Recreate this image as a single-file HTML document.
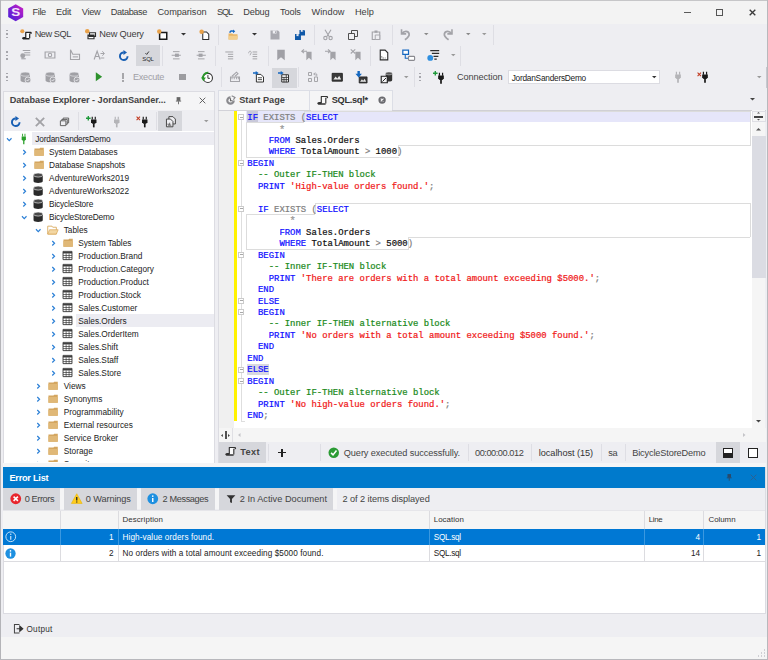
<!DOCTYPE html>
<html><head><meta charset="utf-8"><title>dbForge Studio</title>
<style>html,body{margin:0;padding:0}body{width:768px;height:660px;position:relative;overflow:hidden;background:#eeeef2;font-family:"Liberation Sans",sans-serif}svg{display:block;overflow:visible}</style></head>
<body>
<div style="position:absolute;left:0px;top:0px;width:768px;height:660px;background:#eeeef2;"></div>
<div style="position:absolute;left:0px;top:0px;width:768px;height:24px;background:#f3f3f3;"></div>
<svg style="position:absolute;left:6.80px;top:3.80px" width="17.4" height="17.4" viewBox="0 0 16 16"><defs><linearGradient id="lg" x1="0" y1="1" x2="1" y2="0"><stop offset="0" stop-color="#4420d8"/><stop offset="0.55" stop-color="#8a1fd0"/><stop offset="1" stop-color="#d21fc0"/></linearGradient></defs><path d="M8 0.2L14.9 4.1V11.9L8 15.8L1.1 11.9V4.1Z" fill="url(#lg)"/><text x="8" y="11.3" text-anchor="middle" font-family="Liberation Sans,sans-serif" font-weight="bold" font-size="9.5" fill="#f4e4fa" transform="translate(-2.4,0) scale(1.3,1)">S</text></svg>
<span id="t0" style="position:absolute;left:32.5px;top:6.30px;line-height:13.2px;font-size:9.2px;color:#3c3c3c;font-weight:normal;font-family:'Liberation Sans',sans-serif;letter-spacing:-0.378px;white-space:pre">File</span>
<span id="t1" style="position:absolute;left:56px;top:6.30px;line-height:13.2px;font-size:9.2px;color:#3c3c3c;font-weight:normal;font-family:'Liberation Sans',sans-serif;letter-spacing:-0.136px;white-space:pre">Edit</span>
<span id="t2" style="position:absolute;left:81.8px;top:6.30px;line-height:13.2px;font-size:9.2px;color:#3c3c3c;font-weight:normal;font-family:'Liberation Sans',sans-serif;letter-spacing:-0.262px;white-space:pre">View</span>
<span id="t3" style="position:absolute;left:110.8px;top:6.30px;line-height:13.2px;font-size:9.2px;color:#3c3c3c;font-weight:normal;font-family:'Liberation Sans',sans-serif;letter-spacing:-0.393px;white-space:pre">Database</span>
<span id="t4" style="position:absolute;left:157.5px;top:6.30px;line-height:13.2px;font-size:9.2px;color:#3c3c3c;font-weight:normal;font-family:'Liberation Sans',sans-serif;letter-spacing:-0.053px;white-space:pre">Comparison</span>
<span id="t5" style="position:absolute;left:217px;top:6.30px;line-height:13.2px;font-size:9.2px;color:#3c3c3c;font-weight:normal;font-family:'Liberation Sans',sans-serif;letter-spacing:-1.130px;white-space:pre">SQL</span>
<span id="t6" style="position:absolute;left:243.3px;top:6.30px;line-height:13.2px;font-size:9.2px;color:#3c3c3c;font-weight:normal;font-family:'Liberation Sans',sans-serif;letter-spacing:-0.176px;white-space:pre">Debug</span>
<span id="t7" style="position:absolute;left:280px;top:6.30px;line-height:13.2px;font-size:9.2px;color:#3c3c3c;font-weight:normal;font-family:'Liberation Sans',sans-serif;letter-spacing:-0.131px;white-space:pre">Tools</span>
<span id="t8" style="position:absolute;left:311.5px;top:6.30px;line-height:13.2px;font-size:9.2px;color:#3c3c3c;font-weight:normal;font-family:'Liberation Sans',sans-serif;letter-spacing:0.052px;white-space:pre">Window</span>
<span id="t9" style="position:absolute;left:355px;top:6.30px;line-height:13.2px;font-size:9.2px;color:#3c3c3c;font-weight:normal;font-family:'Liberation Sans',sans-serif;letter-spacing:-0.027px;white-space:pre">Help</span>
<div style="position:absolute;left:684px;top:12px;width:6.8px;height:1px;background:#5a5a5a;"></div>
<div style="position:absolute;left:716.3px;top:9px;width:6.6px;height:6.6px;background:transparent;border:1px solid #555;box-sizing:border-box"></div>
<svg style="position:absolute;left:748.50px;top:8.70px" width="7" height="7" viewBox="0 0 10 10"><path d="M1 1L9 9M9 1L1 9" stroke="#3a3a3a" stroke-width="1.9"/></svg>
<div style="position:absolute;left:6.0px;top:29.900000000000002px;width:1.5px;height:1.5px;background:#a6a6ac;"></div>
<div style="position:absolute;left:6.0px;top:33.3px;width:1.5px;height:1.5px;background:#a6a6ac;"></div>
<div style="position:absolute;left:6.0px;top:36.699999999999996px;width:1.5px;height:1.5px;background:#a6a6ac;"></div>
<div style="position:absolute;left:6.0px;top:51.199999999999996px;width:1.5px;height:1.5px;background:#a6a6ac;"></div>
<div style="position:absolute;left:6.0px;top:54.599999999999994px;width:1.5px;height:1.5px;background:#a6a6ac;"></div>
<div style="position:absolute;left:6.0px;top:57.99999999999999px;width:1.5px;height:1.5px;background:#a6a6ac;"></div>
<div style="position:absolute;left:6.0px;top:72.89999999999999px;width:1.5px;height:1.5px;background:#a6a6ac;"></div>
<div style="position:absolute;left:6.0px;top:76.3px;width:1.5px;height:1.5px;background:#a6a6ac;"></div>
<div style="position:absolute;left:6.0px;top:79.7px;width:1.5px;height:1.5px;background:#a6a6ac;"></div>
<svg style="position:absolute;left:20.00px;top:29.30px" width="4.6" height="4.6" viewBox="0 0 8 8"><circle cx="4" cy="4" r="3.6" fill="#e8a14a"/></svg>
<svg style="position:absolute;left:22.20px;top:31.10px" width="9.6" height="9.6" viewBox="0 0 12 12"><path d="M4.7 2H9.6V9.6H4.7Z" fill="#fafafa"/><path d="M4.2 1.6H10.6C11.8 1.6 11.8 3.2 10.6 3.2M4.7 1.6V9.2M9.6 3V9.2" fill="none" stroke="#222" stroke-width="1.5"/><path d="M1.2 9.8H9.4M1.3 9.8C0.8 9 1.3 8.4 2.2 8.4H4.6" fill="none" stroke="#222" stroke-width="1.9"/></svg>
<span id="t10" style="position:absolute;left:34.7px;top:28.30px;line-height:13.2px;font-size:9.2px;color:#3c3c3c;font-weight:normal;font-family:'Liberation Sans',sans-serif;letter-spacing:-0.461px;white-space:pre">New SQL</span>
<svg style="position:absolute;left:84.50px;top:28.60px" width="12" height="12" viewBox="0 0 16 16"><circle cx="3" cy="3" r="3" fill="#e8a14a"/><path d="M6 5H14V10H6Z M4 8H12V13H4Z" fill="#fff" stroke="#2d2d2d" stroke-width="1.5"/><path d="M4 9H12" stroke="#2d2d2d" stroke-width="2"/></svg>
<span id="t11" style="position:absolute;left:99.3px;top:28.30px;line-height:13.2px;font-size:9.2px;color:#3c3c3c;font-weight:normal;font-family:'Liberation Sans',sans-serif;letter-spacing:-0.173px;white-space:pre">New Query</span>
<svg style="position:absolute;left:157.00px;top:28.60px" width="12" height="12" viewBox="0 0 16 16"><path d="M3.5 4.5H13V13.5H3.5Z" fill="#fff" stroke="#1a1a1a" stroke-width="2"/><circle cx="3" cy="3.2" r="3" fill="#e8a14a"/></svg>
<svg style="position:absolute;left:180.50px;top:32.75px" width="5" height="2.5" viewBox="0 0 10 5"><path d="M0 0h10l-5 5z" fill="#333"/></svg>
<svg style="position:absolute;left:199.00px;top:28.60px" width="12" height="12" viewBox="0 0 16 16"><path d="M5 4H10L13 7V14H5Z" fill="#fff" stroke="#2d2d2d" stroke-width="1.4"/><circle cx="3.5" cy="3.5" r="3" fill="#e8a14a"/></svg>
<div style="position:absolute;left:218px;top:25px;width:1px;height:20px;background:#dedee4;"></div>
<svg style="position:absolute;left:227.00px;top:28.60px" width="12" height="12" viewBox="0 0 16 16"><path d="M2 6H7L8 7H14V14H2Z" fill="#e9b564"/><path d="M3 9H15L13 14H2Z" fill="#f3cf8e"/><path d="M3 5C3 2 6 1.5 8 2V0.5L11 3L8 5.5V4C6 3.5 5 4 5 5Z" fill="#1467c0"/></svg>
<svg style="position:absolute;left:251.50px;top:32.75px" width="5" height="2.5" viewBox="0 0 10 5"><path d="M0 0h10l-5 5z" fill="#333"/></svg>
<svg style="position:absolute;left:269.00px;top:28.60px" width="12" height="12" viewBox="0 0 16 16"><path d="M2 2H12L14 4V14H2Z" fill="#a9a9b0"/><path d="M5 2H10V6H5Z" fill="#eeeef2"/><path d="M8 3H9.3V5.3H8Z" fill="#a9a9b0"/></svg>
<svg style="position:absolute;left:293.70px;top:28.60px" width="12" height="12" viewBox="0 0 16 16"><g transform="translate(6,0) scale(0.62)"><path d="M2 2H12L14 4V14H2Z" fill="#0f58a8"/><path d="M5 2H10V6H5Z" fill="#eeeef2"/><path d="M8 3H9.3V5.3H8Z" fill="#0f58a8"/></g><g transform="translate(0,5.5) scale(0.66)"><path d="M2 2H12L14 4V14H2Z" fill="#0f58a8"/><path d="M5 2H10V6H5Z" fill="#eeeef2"/><path d="M8 3H9.3V5.3H8Z" fill="#0f58a8"/></g></svg>
<div style="position:absolute;left:314px;top:25px;width:1px;height:20px;background:#dedee4;"></div>
<svg style="position:absolute;left:321.80px;top:28.60px" width="12" height="12" viewBox="0 0 16 16"><path d="M4 1L9.5 10M12 1L6.5 10" stroke="#a3a3a8" stroke-width="1.5" fill="none"/><circle cx="4.5" cy="12" r="2.2" fill="none" stroke="#a3a3a8" stroke-width="1.4"/><circle cx="11.5" cy="12" r="2.2" fill="none" stroke="#a3a3a8" stroke-width="1.4"/></svg>
<svg style="position:absolute;left:346.50px;top:28.60px" width="12" height="12" viewBox="0 0 16 16"><path d="M6 2H14V10H6Z" fill="none" stroke="#3c3c3c" stroke-width="1.2"/><path d="M2 6H10V14H2Z" fill="#f0f0f3" stroke="#3c3c3c" stroke-width="1.2"/></svg>
<svg style="position:absolute;left:370.00px;top:28.60px" width="12" height="12" viewBox="0 0 16 16"><path d="M3 4H13V14H3Z" fill="none" stroke="#a3a3a8" stroke-width="1.5"/><path d="M6 2H10V5H6Z" fill="#a3a3a8"/><path d="M7 8H13V14H7Z" fill="#eeeef2" stroke="#a3a3a8" stroke-width="1.2"/></svg>
<div style="position:absolute;left:392px;top:25px;width:1px;height:20px;background:#dedee4;"></div>
<svg style="position:absolute;left:398.55px;top:27.85px" width="13.5" height="13.5" viewBox="0 0 16 16"><path d="M3 1.5V7H8.5" fill="none" stroke="#a3a3a8" stroke-width="1.9"/><path d="M3.5 6.5C6 3 11 3 12 7C12.5 10 10 12 7 14" fill="none" stroke="#a3a3a8" stroke-width="2.1"/></svg>
<svg style="position:absolute;left:423.75px;top:32.88px" width="4.5" height="2.25" viewBox="0 0 10 5"><path d="M0 0h10l-5 5z" fill="#888"/></svg>
<svg style="position:absolute;left:440.95px;top:27.85px" width="13.5" height="13.5" viewBox="0 0 16 16"><g transform="translate(16,0) scale(-1,1)"><path d="M3 1.5V7H8.5" fill="none" stroke="#a3a3a8" stroke-width="1.9"/><path d="M3.5 6.5C6 3 11 3 12 7C12.5 10 10 12 7 14" fill="none" stroke="#a3a3a8" stroke-width="2.1"/></g></svg>
<svg style="position:absolute;left:465.75px;top:32.88px" width="4.5" height="2.25" viewBox="0 0 10 5"><path d="M0 0h10l-5 5z" fill="#888"/></svg>
<svg style="position:absolute;left:482.45px;top:32.88px" width="4.5" height="2.25" viewBox="0 0 10 5"><path d="M0 0h10l-5 5z" fill="#999"/></svg>
<div style="position:absolute;left:492.5px;top:25px;width:1px;height:20px;background:#dedee4;"></div>
<svg style="position:absolute;left:19.00px;top:49.30px" width="12" height="12" viewBox="0 0 16 16"><path d="M5 2H15M7 5H15M7 8H15" stroke="#a3a3a8" stroke-width="1.5"/><circle cx="5" cy="9" r="3.3" fill="#a3a3a8"/><path d="M3 13H9" stroke="#a3a3a8" stroke-width="1.5"/></svg>
<svg style="position:absolute;left:44.00px;top:49.30px" width="12" height="12" viewBox="0 0 16 16"><path d="M1.5 4H14.5V12H1.5Z" fill="none" stroke="#a3a3a8" stroke-width="1.5"/><circle cx="8" cy="8" r="2.3" fill="none" stroke="#a3a3a8" stroke-width="1.4"/></svg>
<svg style="position:absolute;left:68.70px;top:49.30px" width="12" height="12" viewBox="0 0 16 16"><path d="M2 1V14H14V7H5Z" fill="none" stroke="#a3a3a8" stroke-width="1.5"/><path d="M5 10.5H12" stroke="#a3a3a8" stroke-width="1.4"/></svg>
<svg style="position:absolute;left:92.70px;top:49.30px" width="12" height="12" viewBox="0 0 16 16"><path d="M1.5 14L5.5 3L9.5 14M3 10H8" fill="none" stroke="#a3a3a8" stroke-width="1.5"/><path d="M10 6H15M12.5 3L15 6L12.5 9M10 12H15" stroke="#a3a3a8" stroke-width="1.3" fill="none"/></svg>
<svg style="position:absolute;left:117.55px;top:49.95px" width="11.5" height="11.5" viewBox="0 0 16 16"><path d="M13.3 8.8A5.3 5.3 0 1 1 8 3.4" fill="none" stroke="#185fb4" stroke-width="2.7"/><path d="M7.6 0L12.6 3.4L7.6 7Z" fill="#185fb4"/></svg>
<div style="position:absolute;left:136px;top:45.2px;width:24px;height:20.4px;background:#d6d7dc;"></div>
<span id="t12" style="position:absolute;left:142.3px;top:53.80px;line-height:10px;font-size:6px;color:#2a2a2a;font-weight:normal;font-family:'Liberation Sans',sans-serif;letter-spacing:-0.172px;white-space:pre">SQL</span>
<svg style="position:absolute;left:145.00px;top:50.70px" width="4.4" height="4.4" viewBox="0 0 9 9"><path d="M1 4.5L3.5 7L8 1" stroke="#222" stroke-width="1.8" fill="none"/></svg>
<div style="position:absolute;left:162px;top:46px;width:1px;height:20px;background:#dedee4;"></div>
<svg style="position:absolute;left:171.45px;top:50.05px" width="10.5" height="10.5" viewBox="0 0 16 16"><path d="M3 2.5H13M1 8H15M3 13.5H13" stroke="#a3a3a8" stroke-width="1.5"/><path d="M6 5.5H12V10.5H6Z" fill="#a3a3a8"/></svg>
<svg style="position:absolute;left:195.55px;top:50.05px" width="10.5" height="10.5" viewBox="0 0 16 16"><path d="M3 2.5H13M1 8H15M3 13.5H13" stroke="#a3a3a8" stroke-width="1.5"/><path d="M4 5.5H10V10.5H4Z" fill="#a3a3a8"/></svg>
<div style="position:absolute;left:215px;top:46px;width:1px;height:20px;background:#dedee4;"></div>
<svg style="position:absolute;left:223.75px;top:50.05px" width="10.5" height="10.5" viewBox="0 0 16 16"><path d="M2 3H14M6 6.5H14M6 10H14M6 13.5H14" stroke="#a3a3a8" stroke-width="1.5"/></svg>
<svg style="position:absolute;left:248.05px;top:50.05px" width="10.5" height="10.5" viewBox="0 0 16 16"><path d="M7 3H14M7 6.5H14M7 10H14M7 13.5H14" stroke="#a3a3a8" stroke-width="1.5"/><path d="M1 5C1 1 5 1 5 4C5 6 3 6 3 8" stroke="#a3a3a8" stroke-width="1.3" fill="none"/></svg>
<div style="position:absolute;left:268px;top:46px;width:1px;height:20px;background:#dedee4;"></div>
<svg style="position:absolute;left:275.30px;top:49.30px" width="12" height="12" viewBox="0 0 16 16"><path d="M3 1H13V15L8 11L3 15Z" fill="#a0a0a6"/></svg>
<svg style="position:absolute;left:300.70px;top:49.30px" width="12" height="12" viewBox="0 0 16 16"><g transform="translate(5,3) scale(0.7,0.8)"><path d="M3 1H13V15L8 11L3 15Z" fill="#a3a3a8"/></g><path d="M8 3H1M4 0.5L1 3L4 5.5" stroke="#a3a3a8" stroke-width="1.4" fill="none"/></svg>
<svg style="position:absolute;left:324.80px;top:49.30px" width="12" height="12" viewBox="0 0 16 16"><g transform="translate(5,3) scale(0.7,0.8)"><path d="M3 1H13V15L8 11L3 15Z" fill="#a3a3a8"/></g><path d="M0 3H7M4 0.5L7 3L4 5.5" stroke="#a3a3a8" stroke-width="1.4" fill="none"/></svg>
<svg style="position:absolute;left:349.80px;top:49.30px" width="12" height="12" viewBox="0 0 16 16"><g transform="translate(5,3) scale(0.7,0.8)"><path d="M3 1H13V15L8 11L3 15Z" fill="#a3a3a8"/></g><path d="M1 0.5L7 6M7 0.5L1 6" stroke="#a3a3a8" stroke-width="1.4" fill="none"/></svg>
<div style="position:absolute;left:369.5px;top:46px;width:1px;height:20px;background:#dedee4;"></div>
<svg style="position:absolute;left:378.00px;top:49.30px" width="12" height="12" viewBox="0 0 16 16"><path d="M3 1.5H9.5L13 5V14.5H3Z" fill="#fff" stroke="#2d2d2d" stroke-width="1.5"/><path d="M5 12H11M5 9.5V12" stroke="#2d2d2d" stroke-width="1" stroke-dasharray="1 1"/></svg>
<svg style="position:absolute;left:401.50px;top:48.80px" width="13" height="13" viewBox="0 0 16 16"><path d="M1 1.5H8V6.5H1Z" fill="#fff" stroke="#1467c0" stroke-width="1.5"/><path d="M4 7V11.5H8" fill="none" stroke="#1467c0" stroke-width="1.3"/><rect x="8" y="9" width="7.5" height="5" rx="1" fill="#fff" stroke="#8a8a90" stroke-width="1.4"/></svg>
<svg style="position:absolute;left:426.50px;top:48.80px" width="13" height="13" viewBox="0 0 16 16"><path d="M4 2H15M6 5.5H15M8 9H14M9 12.5H12" stroke="#2d2d2d" stroke-width="1.6"/><circle cx="4" cy="11" r="3.6" fill="#2f8fe0"/></svg>
<svg style="position:absolute;left:450.75px;top:54.17px" width="4.5" height="2.25" viewBox="0 0 10 5"><path d="M0 0h10l-5 5z" fill="#999"/></svg>
<div style="position:absolute;left:460px;top:46px;width:1px;height:20px;background:#dedee4;"></div>
<svg style="position:absolute;left:18.75px;top:70.75px" width="12.5" height="12.5" viewBox="0 0 16 16"><path d="M2 4V12C2 15 14 15 14 12V4Z" fill="#a0a0a5"/><ellipse cx="8" cy="4" rx="6" ry="2.6" fill="#a0a0a5" stroke="#eeeef2" stroke-width="0.8"/><circle cx="11.5" cy="11.5" r="3.8" fill="#a3a3a8" stroke="#eeeef2" stroke-width="1"/><path d="M9.8 11.5L11 12.8L13.3 10.2" stroke="#eeeef2" stroke-width="1.1" fill="none"/></svg>
<svg style="position:absolute;left:43.75px;top:70.75px" width="12.5" height="12.5" viewBox="0 0 16 16"><path d="M2 4V12C2 15 14 15 14 12V4Z" fill="#a0a0a5"/><ellipse cx="8" cy="4" rx="6" ry="2.6" fill="#a0a0a5" stroke="#eeeef2" stroke-width="0.8"/><circle cx="11.5" cy="11.5" r="3.8" fill="#a3a3a8" stroke="#eeeef2" stroke-width="1"/><path d="M9.8 11.5L11 12.8L13.3 10.2" stroke="#eeeef2" stroke-width="1.1" fill="none"/></svg>
<svg style="position:absolute;left:68.25px;top:70.75px" width="12.5" height="12.5" viewBox="0 0 16 16"><path d="M2 4V12C2 15 14 15 14 12V4Z" fill="#a0a0a5"/><ellipse cx="8" cy="4" rx="6" ry="2.6" fill="#a0a0a5" stroke="#eeeef2" stroke-width="0.8"/><circle cx="11.5" cy="11.5" r="3.8" fill="#a3a3a8" stroke="#eeeef2" stroke-width="1"/><path d="M9.8 11.5L11 12.8L13.3 10.2" stroke="#eeeef2" stroke-width="1.1" fill="none"/></svg>
<svg style="position:absolute;left:94.00px;top:72.30px" width="9.6" height="9.6" viewBox="0 0 16 16"><path d="M3 0.5L13.6 8L3 15.5Z" fill="#2d922d"/></svg>
<div style="position:absolute;left:122.4px;top:72.5px;width:1.4px;height:6px;background:#a6a6aa;"></div>
<div style="position:absolute;left:122.4px;top:80px;width:1.4px;height:1.5px;background:#a6a6aa;"></div>
<span id="t13" style="position:absolute;left:133px;top:71.30px;line-height:13.2px;font-size:9.2px;color:#a0a0a6;font-weight:normal;font-family:'Liberation Sans',sans-serif;letter-spacing:-0.315px;white-space:pre">Execute</span>
<div style="position:absolute;left:179.2px;top:73.7px;width:6.7px;height:6.7px;background:#9c9ca0;"></div>
<svg style="position:absolute;left:201.00px;top:70.50px" width="13" height="13" viewBox="0 0 16 16"><circle cx="8.5" cy="8.5" r="5.6" fill="#fff" stroke="#333" stroke-width="1.3"/><path d="M8.5 5V9H11" stroke="#333" stroke-width="1.2" fill="none"/><path d="M2.5 10A6.3 6.3 0 0 1 9 2" fill="none" stroke="#2a9a2a" stroke-width="2.2"/><path d="M0 8L3 12.5L6 8Z" fill="#2a9a2a"/></svg>
<div style="position:absolute;left:221px;top:67px;width:1px;height:20px;background:#dedee4;"></div>
<svg style="position:absolute;left:229.00px;top:71.00px" width="12" height="12" viewBox="0 0 16 16"><path d="M2 8H14V14H2Z" fill="none" stroke="#a3a3a8" stroke-width="1.4"/><path d="M4 8V11M7 8V11M10 8V11M12.5 8V11" stroke="#a3a3a8" stroke-width="1.2"/><path d="M4 7L10 1.5L12 3.5L8 7" fill="none" stroke="#a3a3a8" stroke-width="1.4"/></svg>
<svg style="position:absolute;left:253.00px;top:71.00px" width="12" height="12" viewBox="0 0 16 16"><path d="M4.5 4.5H10.5L14 8V14.7H4.5Z" fill="#fff" stroke="#2d2d2d" stroke-width="1.3"/><path d="M6.5 9H12M6.5 11.5H12" stroke="#2d2d2d" stroke-width="1.1"/><path d="M0 1.7H3.6V0L7.6 2.7L3.6 5.4V3.7H0Z" fill="#1467c0"/></svg>
<div style="position:absolute;left:272px;top:67.5px;width:24.7px;height:20.5px;background:#d6d7dc;"></div>
<svg style="position:absolute;left:278.00px;top:71.00px" width="12" height="12" viewBox="0 0 16 16"><path d="M5 5H14V14.7H5Z" fill="#fff" stroke="#2d2d2d" stroke-width="1.3"/><path d="M5 8.5H14M5 11.5H14M8 8V15M11 5V15" stroke="#2d2d2d" stroke-width="1.1"/><path d="M0 1.7H3.6V0L7.6 2.7L3.6 5.4V3.7H0Z" fill="#1467c0"/></svg>
<div style="position:absolute;left:298.3px;top:67px;width:1px;height:20px;background:#dedee4;"></div>
<svg style="position:absolute;left:306.80px;top:71.00px" width="12" height="12" viewBox="0 0 16 16"><path d="M2 2H6V6H2ZM2 10H6V14H2ZM10 8H14V14H10Z" fill="none" stroke="#a3a3a8" stroke-width="1.3"/><path d="M9 4H13V7M11 2L9 4L11 6" fill="none" stroke="#a3a3a8" stroke-width="1.2"/></svg>
<svg style="position:absolute;left:330.75px;top:70.75px" width="12.5" height="12.5" viewBox="0 0 16 16"><path d="M1.5 3H14.5V13H1.5Z" fill="#3a3a3a" stroke="#222" stroke-width="1.2"/><path d="M3 11L6 7L8 9.5L10.5 6L13 11Z" fill="#e8e8e8"/></svg>
<svg style="position:absolute;left:355.20px;top:70.50px" width="13" height="13" viewBox="0 0 16 16"><g transform="translate(4,5) scale(0.75)"><path d="M1.5 3H14.5V13H1.5Z" fill="#3a3a3a" stroke="#222" stroke-width="1.2"/><path d="M3 11L6 7L8 9.5L10.5 6L13 11Z" fill="#e8e8e8"/></g><path d="M3 0H6V3.5H8.5L4.5 8L0.5 3.5H3Z" fill="#1467c0"/></svg>
<svg style="position:absolute;left:380.20px;top:70.50px" width="13" height="13" viewBox="0 0 16 16"><path d="M7 3V11C7 13.5 15 13.5 15 11V3Z" fill="#333"/><ellipse cx="11" cy="3" rx="4" ry="1.8" fill="#555" stroke="#eeeef2" stroke-width="0.6"/><path d="M1.5 6.5H9V14.5H1.5Z" fill="#f2f2f4" stroke="#222" stroke-width="1.4"/><path d="M3 13L7.5 8.5" stroke="#222" stroke-width="1.2"/></svg>
<svg style="position:absolute;left:403.75px;top:75.88px" width="4.5" height="2.25" viewBox="0 0 10 5"><path d="M0 0h10l-5 5z" fill="#999"/></svg>
<div style="position:absolute;left:413.7px;top:67px;width:1px;height:20px;background:#dedee4;"></div>
<div style="position:absolute;left:419.3px;top:72.89999999999999px;width:1.5px;height:1.5px;background:#a6a6ac;"></div>
<div style="position:absolute;left:419.3px;top:76.3px;width:1.5px;height:1.5px;background:#a6a6ac;"></div>
<div style="position:absolute;left:419.3px;top:79.7px;width:1.5px;height:1.5px;background:#a6a6ac;"></div>
<svg style="position:absolute;left:434.50px;top:71.50px" width="12" height="12" viewBox="0 0 16 16"><path d="M5.9 1V5M10.1 1V5" stroke="#1a1a1a" stroke-width="1.6"/><path d="M4.2 4.8H11.8V8.6L9.8 10.8H6.2L4.2 8.6Z" fill="#1a1a1a"/><path d="M8 10V15.8" stroke="#1a1a1a" stroke-width="2.3"/></svg>
<svg style="position:absolute;left:432.90px;top:71.30px" width="4.6" height="4.6" viewBox="0 0 8 8"><path d="M4 0V8M0 4H8" stroke="#1f9a3a" stroke-width="2.4"/></svg>
<span id="t14" style="position:absolute;left:457px;top:71.30px;line-height:13.2px;font-size:9.2px;color:#444;font-weight:normal;font-family:'Liberation Sans',sans-serif;letter-spacing:-0.098px;white-space:pre">Connection</span>
<div style="position:absolute;left:507.8px;top:70.3px;width:152.7px;height:13.5px;background:#fff;border:1px solid #dcdce2;box-sizing:border-box"></div>
<span id="t15" style="position:absolute;left:511.7px;top:72.05px;line-height:12.3px;font-size:8.3px;color:#222;font-weight:normal;font-family:'Liberation Sans',sans-serif;letter-spacing:-0.242px;white-space:pre">JordanSandersDemo</span>
<svg style="position:absolute;left:651.75px;top:76.17px" width="4.5" height="2.25" viewBox="0 0 10 5"><path d="M0 0h10l-5 5z" fill="#333"/></svg>
<svg style="position:absolute;left:672.00px;top:71.00px" width="12" height="12" viewBox="0 0 16 16"><path d="M5.9 1V5M10.1 1V5" stroke="#b4b4b8" stroke-width="1.6"/><path d="M4.2 4.8H11.8V8.6L9.8 10.8H6.2L4.2 8.6Z" fill="#b4b4b8"/><path d="M8 10V15.8" stroke="#b4b4b8" stroke-width="2.3"/></svg>
<svg style="position:absolute;left:699.00px;top:71.20px" width="12" height="12" viewBox="0 0 16 16"><path d="M5.9 1V5M10.1 1V5" stroke="#1a1a1a" stroke-width="1.6"/><path d="M4.2 4.8H11.8V8.6L9.8 10.8H6.2L4.2 8.6Z" fill="#1a1a1a"/><path d="M8 10V15.8" stroke="#1a1a1a" stroke-width="2.3"/></svg>
<svg style="position:absolute;left:697.00px;top:71.90px" width="4.6" height="4.6" viewBox="0 0 8 8"><path d="M1 1L7 7M7 1L1 7" stroke="#c23b22" stroke-width="1.8"/></svg>
<svg style="position:absolute;left:757.25px;top:76.17px" width="4.5" height="2.25" viewBox="0 0 10 5"><path d="M0 0h10l-5 5z" fill="#999"/></svg>
<div style="position:absolute;left:766px;top:67px;width:1px;height:21px;background:#c8c8d0;"></div>
<div style="position:absolute;left:2.5px;top:90.5px;width:212px;height:373px;background:#fff;border:1px solid #dcdce2;box-sizing:border-box"></div>
<div style="position:absolute;left:3.5px;top:91.5px;width:210px;height:18.5px;background:#f5f5f6;"></div>
<span id="t16" style="position:absolute;left:9.7px;top:93.90px;line-height:13.2px;font-size:9.2px;color:#444;font-weight:bold;font-family:'Liberation Sans',sans-serif;letter-spacing:-0.048px;white-space:pre">Database Explorer - JordanSander...</span>
<svg style="position:absolute;left:173.50px;top:95.80px" width="9" height="9" viewBox="0 0 12 12"><path d="M3.5 1.5H8.5V6.5H3.5Z" fill="#666"/><path d="M2.5 6.8H9.5M6 7V11" stroke="#666" stroke-width="1.2"/></svg>
<svg style="position:absolute;left:198.70px;top:96.80px" width="7" height="7" viewBox="0 0 10 10"><path d="M1 1L9 9M9 1L1 9" stroke="#555" stroke-width="1.3"/></svg>
<div style="position:absolute;left:3.5px;top:110px;width:210px;height:21.3px;background:#eeeef2;"></div>
<svg style="position:absolute;left:9.55px;top:116.05px" width="11.5" height="11.5" viewBox="0 0 16 16"><path d="M13.3 8.8A5.3 5.3 0 1 1 8 3.4" fill="none" stroke="#185fb4" stroke-width="2.7"/><path d="M7.6 0L12.6 3.4L7.6 7Z" fill="#185fb4"/></svg>
<svg style="position:absolute;left:34.50px;top:116.80px" width="10" height="10" viewBox="0 0 12 12"><path d="M1 1L11 11M11 1L1 11" stroke="#a2a2a6" stroke-width="2.2"/></svg>
<svg style="position:absolute;left:59.00px;top:116.00px" width="11" height="11" viewBox="0 0 16 16"><path d="M6 3H14V10H6Z" fill="none" stroke="#555" stroke-width="1.3"/><path d="M4 5H12V12H4Z" fill="#eeeef2" stroke="#555" stroke-width="1.3"/><path d="M2 7H10V14H2Z" fill="#eeeef2" stroke="#555" stroke-width="1.3"/></svg>
<div style="position:absolute;left:78px;top:112px;width:1px;height:18px;background:#dedee4;"></div>
<svg style="position:absolute;left:88.25px;top:116.05px" width="11.5" height="11.5" viewBox="0 0 16 16"><path d="M5.9 1V5M10.1 1V5" stroke="#1a1a1a" stroke-width="1.6"/><path d="M4.2 4.8H11.8V8.6L9.8 10.8H6.2L4.2 8.6Z" fill="#1a1a1a"/><path d="M8 10V15.8" stroke="#1a1a1a" stroke-width="2.3"/></svg>
<svg style="position:absolute;left:86.40px;top:115.60px" width="4.6" height="4.6" viewBox="0 0 8 8"><path d="M4 0V8M0 4H8" stroke="#1f9a3a" stroke-width="2.4"/></svg>
<svg style="position:absolute;left:111.25px;top:116.05px" width="11.5" height="11.5" viewBox="0 0 16 16"><path d="M5.9 1V5M10.1 1V5" stroke="#b4b4b8" stroke-width="1.6"/><path d="M4.2 4.8H11.8V8.6L9.8 10.8H6.2L4.2 8.6Z" fill="#b4b4b8"/><path d="M8 10V15.8" stroke="#b4b4b8" stroke-width="2.3"/></svg>
<svg style="position:absolute;left:138.75px;top:116.05px" width="11.5" height="11.5" viewBox="0 0 16 16"><path d="M5.9 1V5M10.1 1V5" stroke="#1a1a1a" stroke-width="1.6"/><path d="M4.2 4.8H11.8V8.6L9.8 10.8H6.2L4.2 8.6Z" fill="#1a1a1a"/><path d="M8 10V15.8" stroke="#1a1a1a" stroke-width="2.3"/></svg>
<svg style="position:absolute;left:136.30px;top:116.00px" width="4.6" height="4.6" viewBox="0 0 8 8"><path d="M1 1L7 7M7 1L1 7" stroke="#c23b22" stroke-width="1.8"/></svg>
<div style="position:absolute;left:156px;top:112px;width:1px;height:18px;background:#dedee4;"></div>
<div style="position:absolute;left:158px;top:111px;width:24px;height:20px;background:#d6d7dc;"></div>
<svg style="position:absolute;left:163.50px;top:115.00px" width="13" height="13" viewBox="0 0 16 16"><path d="M6 2H11L14 5V11H6Z" fill="#eeeef2" stroke="#444" stroke-width="1.2"/><path d="M3 5H8L11 8V14.5H3Z" fill="#eeeef2" stroke="#444" stroke-width="1.2"/><path d="M5 12.5H9M5 10.5V12.5M7 9.5V12.5" stroke="#444" stroke-width="1"/></svg>
<svg style="position:absolute;left:203.75px;top:120.38px" width="4.5" height="2.25" viewBox="0 0 10 5"><path d="M0 0h10l-5 5z" fill="#999"/></svg>
<div style="position:absolute;left:3.5px;top:131.3px;width:210px;height:331.2px;overflow:hidden">
<!--tree-->
<div style="position:absolute;left:28.2px;top:1.0px;width:183px;height:12.5px;background:#ececf2;"></div>
<svg style="position:absolute;left:2.45px;top:4.45px" width="6.5" height="6.5" viewBox="0 0 10 10"><path d="M1.5 3.5L5 7L8.5 3.5" fill="none" stroke="#2a7fd6" stroke-width="1.8"/></svg>
<svg style="position:absolute;left:14.55px;top:1.45px" width="11.5" height="11.5" viewBox="0 0 16 16"><g transform="translate(1.8,0) scale(0.78,1)"><path d="M5.9 1V5M10.1 1V5" stroke="#2aa02a" stroke-width="1.6"/><path d="M4.2 4.8H11.8V8.6L9.8 10.8H6.2L4.2 8.6Z" fill="#2aa02a"/><path d="M8 10V15.8" stroke="#2aa02a" stroke-width="2.3"/></g></svg>
<span id="t17" style="position:absolute;left:31.8px;top:1.75px;line-height:12.3px;font-size:8.3px;color:#222;font-weight:normal;font-family:'Liberation Sans',sans-serif;letter-spacing:-0.200px;white-space:pre">JordanSandersDemo</span>
<svg style="position:absolute;left:17.05px;top:17.46px" width="6.5" height="6.5" viewBox="0 0 10 10"><path d="M3.5 1.5L7 5L3.5 8.5" fill="none" stroke="#2a7fd6" stroke-width="1.8"/></svg>
<svg style="position:absolute;left:29.15px;top:14.66px" width="11.5" height="11.5" viewBox="0 0 16 16"><path d="M2 3.5H9L10 2.5H15V13.5H2Z" fill="#d4a660"/><path d="M2 5.5H15V13.5H2Z" fill="#e0b877"/></svg>
<span id="t18" style="position:absolute;left:45.599999999999994px;top:14.76px;line-height:12.3px;font-size:8.3px;color:#222;font-weight:normal;font-family:'Liberation Sans',sans-serif;letter-spacing:-0.078px;white-space:pre">System Databases</span>
<svg style="position:absolute;left:17.05px;top:30.47px" width="6.5" height="6.5" viewBox="0 0 10 10"><path d="M3.5 1.5L7 5L3.5 8.5" fill="none" stroke="#2a7fd6" stroke-width="1.8"/></svg>
<svg style="position:absolute;left:29.15px;top:27.67px" width="11.5" height="11.5" viewBox="0 0 16 16"><path d="M2 3.5H9L10 2.5H15V13.5H2Z" fill="#d4a660"/><path d="M2 5.5H15V13.5H2Z" fill="#e0b877"/></svg>
<span id="t19" style="position:absolute;left:45.599999999999994px;top:27.77px;line-height:12.3px;font-size:8.3px;color:#222;font-weight:normal;font-family:'Liberation Sans',sans-serif;letter-spacing:-0.057px;white-space:pre">Database Snapshots</span>
<svg style="position:absolute;left:17.05px;top:43.48px" width="6.5" height="6.5" viewBox="0 0 10 10"><path d="M3.5 1.5L7 5L3.5 8.5" fill="none" stroke="#2a7fd6" stroke-width="1.8"/></svg>
<svg style="position:absolute;left:28.75px;top:40.38px" width="12.3" height="12.3" viewBox="0 0 16 16"><path d="M2 4V12C2 15 14 15 14 12V4Z" fill="#2a2a2a"/><ellipse cx="8" cy="4" rx="6" ry="2.6" fill="#4a4a4a" stroke="#fff" stroke-width="0.8"/></svg>
<span id="t20" style="position:absolute;left:45.599999999999994px;top:40.78px;line-height:12.3px;font-size:8.3px;color:#222;font-weight:normal;font-family:'Liberation Sans',sans-serif;letter-spacing:0.020px;white-space:pre">AdventureWorks2019</span>
<svg style="position:absolute;left:17.05px;top:56.49px" width="6.5" height="6.5" viewBox="0 0 10 10"><path d="M3.5 1.5L7 5L3.5 8.5" fill="none" stroke="#2a7fd6" stroke-width="1.8"/></svg>
<svg style="position:absolute;left:28.75px;top:53.39px" width="12.3" height="12.3" viewBox="0 0 16 16"><path d="M2 4V12C2 15 14 15 14 12V4Z" fill="#2a2a2a"/><ellipse cx="8" cy="4" rx="6" ry="2.6" fill="#4a4a4a" stroke="#fff" stroke-width="0.8"/></svg>
<span id="t21" style="position:absolute;left:45.599999999999994px;top:53.79px;line-height:12.3px;font-size:8.3px;color:#222;font-weight:normal;font-family:'Liberation Sans',sans-serif;letter-spacing:0.020px;white-space:pre">AdventureWorks2022</span>
<svg style="position:absolute;left:17.05px;top:69.50px" width="6.5" height="6.5" viewBox="0 0 10 10"><path d="M3.5 1.5L7 5L3.5 8.5" fill="none" stroke="#2a7fd6" stroke-width="1.8"/></svg>
<svg style="position:absolute;left:28.75px;top:66.40px" width="12.3" height="12.3" viewBox="0 0 16 16"><path d="M2 4V12C2 15 14 15 14 12V4Z" fill="#2a2a2a"/><ellipse cx="8" cy="4" rx="6" ry="2.6" fill="#4a4a4a" stroke="#fff" stroke-width="0.8"/></svg>
<span id="t22" style="position:absolute;left:45.599999999999994px;top:66.80px;line-height:12.3px;font-size:8.3px;color:#222;font-weight:normal;font-family:'Liberation Sans',sans-serif;letter-spacing:-0.177px;white-space:pre">BicycleStore</span>
<svg style="position:absolute;left:17.05px;top:82.51px" width="6.5" height="6.5" viewBox="0 0 10 10"><path d="M1.5 3.5L5 7L8.5 3.5" fill="none" stroke="#2a7fd6" stroke-width="1.8"/></svg>
<svg style="position:absolute;left:28.75px;top:79.41px" width="12.3" height="12.3" viewBox="0 0 16 16"><path d="M2 4V12C2 15 14 15 14 12V4Z" fill="#2a2a2a"/><ellipse cx="8" cy="4" rx="6" ry="2.6" fill="#4a4a4a" stroke="#fff" stroke-width="0.8"/></svg>
<span id="t23" style="position:absolute;left:45.599999999999994px;top:79.81px;line-height:12.3px;font-size:8.3px;color:#222;font-weight:normal;font-family:'Liberation Sans',sans-serif;letter-spacing:-0.203px;white-space:pre">BicycleStoreDemo</span>
<svg style="position:absolute;left:31.65px;top:95.52px" width="6.5" height="6.5" viewBox="0 0 10 10"><path d="M1.5 3.5L5 7L8.5 3.5" fill="none" stroke="#2a7fd6" stroke-width="1.8"/></svg>
<svg style="position:absolute;left:43.75px;top:92.72px" width="11.5" height="11.5" viewBox="0 0 16 16"><path d="M1 3H7L8 4.5H13V14H1Z" fill="#fff" stroke="#d9a95a" stroke-width="1.2"/><path d="M3.5 8H15.5L13 14H1Z" fill="#f3d7a3" stroke="#d9a95a" stroke-width="1"/></svg>
<span id="t24" style="position:absolute;left:60.2px;top:92.82px;line-height:12.3px;font-size:8.3px;color:#222;font-weight:normal;font-family:'Liberation Sans',sans-serif;letter-spacing:0.003px;white-space:pre">Tables</span>
<svg style="position:absolute;left:46.25px;top:108.53px" width="6.5" height="6.5" viewBox="0 0 10 10"><path d="M3.5 1.5L7 5L3.5 8.5" fill="none" stroke="#2a7fd6" stroke-width="1.8"/></svg>
<svg style="position:absolute;left:58.35px;top:105.73px" width="11.5" height="11.5" viewBox="0 0 16 16"><path d="M2 3.5H9L10 2.5H15V13.5H2Z" fill="#d4a660"/><path d="M2 5.5H15V13.5H2Z" fill="#e0b877"/></svg>
<span id="t25" style="position:absolute;left:74.8px;top:105.83px;line-height:12.3px;font-size:8.3px;color:#222;font-weight:normal;font-family:'Liberation Sans',sans-serif;letter-spacing:-0.062px;white-space:pre">System Tables</span>
<svg style="position:absolute;left:46.25px;top:121.54px" width="6.5" height="6.5" viewBox="0 0 10 10"><path d="M3.5 1.5L7 5L3.5 8.5" fill="none" stroke="#2a7fd6" stroke-width="1.8"/></svg>
<svg style="position:absolute;left:58.60px;top:118.99px" width="11" height="11" viewBox="0 0 16 16"><path d="M1.5 2H14.5V14H1.5Z" fill="#fff" stroke="#333" stroke-width="1.3"/><path d="M1.5 3H14.5V5H1.5Z" fill="#333"/><path d="M1.5 8H14.5M1.5 11H14.5M6 5V14M10.3 5V14" stroke="#333" stroke-width="1"/></svg>
<span id="t26" style="position:absolute;left:74.8px;top:118.84px;line-height:12.3px;font-size:8.3px;color:#222;font-weight:normal;font-family:'Liberation Sans',sans-serif;letter-spacing:0.000px;white-space:pre">Production.Brand</span>
<svg style="position:absolute;left:46.25px;top:134.55px" width="6.5" height="6.5" viewBox="0 0 10 10"><path d="M3.5 1.5L7 5L3.5 8.5" fill="none" stroke="#2a7fd6" stroke-width="1.8"/></svg>
<svg style="position:absolute;left:58.60px;top:132.00px" width="11" height="11" viewBox="0 0 16 16"><path d="M1.5 2H14.5V14H1.5Z" fill="#fff" stroke="#333" stroke-width="1.3"/><path d="M1.5 3H14.5V5H1.5Z" fill="#333"/><path d="M1.5 8H14.5M1.5 11H14.5M6 5V14M10.3 5V14" stroke="#333" stroke-width="1"/></svg>
<span id="t27" style="position:absolute;left:74.8px;top:131.85px;line-height:12.3px;font-size:8.3px;color:#222;font-weight:normal;font-family:'Liberation Sans',sans-serif;letter-spacing:0.000px;white-space:pre">Production.Category</span>
<svg style="position:absolute;left:46.25px;top:147.56px" width="6.5" height="6.5" viewBox="0 0 10 10"><path d="M3.5 1.5L7 5L3.5 8.5" fill="none" stroke="#2a7fd6" stroke-width="1.8"/></svg>
<svg style="position:absolute;left:58.60px;top:145.01px" width="11" height="11" viewBox="0 0 16 16"><path d="M1.5 2H14.5V14H1.5Z" fill="#fff" stroke="#333" stroke-width="1.3"/><path d="M1.5 3H14.5V5H1.5Z" fill="#333"/><path d="M1.5 8H14.5M1.5 11H14.5M6 5V14M10.3 5V14" stroke="#333" stroke-width="1"/></svg>
<span id="t28" style="position:absolute;left:74.8px;top:144.86px;line-height:12.3px;font-size:8.3px;color:#222;font-weight:normal;font-family:'Liberation Sans',sans-serif;letter-spacing:0.000px;white-space:pre">Production.Product</span>
<svg style="position:absolute;left:46.25px;top:160.57px" width="6.5" height="6.5" viewBox="0 0 10 10"><path d="M3.5 1.5L7 5L3.5 8.5" fill="none" stroke="#2a7fd6" stroke-width="1.8"/></svg>
<svg style="position:absolute;left:58.60px;top:158.02px" width="11" height="11" viewBox="0 0 16 16"><path d="M1.5 2H14.5V14H1.5Z" fill="#fff" stroke="#333" stroke-width="1.3"/><path d="M1.5 3H14.5V5H1.5Z" fill="#333"/><path d="M1.5 8H14.5M1.5 11H14.5M6 5V14M10.3 5V14" stroke="#333" stroke-width="1"/></svg>
<span id="t29" style="position:absolute;left:74.8px;top:157.87px;line-height:12.3px;font-size:8.3px;color:#222;font-weight:normal;font-family:'Liberation Sans',sans-serif;letter-spacing:0.000px;white-space:pre">Production.Stock</span>
<svg style="position:absolute;left:46.25px;top:173.58px" width="6.5" height="6.5" viewBox="0 0 10 10"><path d="M3.5 1.5L7 5L3.5 8.5" fill="none" stroke="#2a7fd6" stroke-width="1.8"/></svg>
<svg style="position:absolute;left:58.60px;top:171.03px" width="11" height="11" viewBox="0 0 16 16"><path d="M1.5 2H14.5V14H1.5Z" fill="#fff" stroke="#333" stroke-width="1.3"/><path d="M1.5 3H14.5V5H1.5Z" fill="#333"/><path d="M1.5 8H14.5M1.5 11H14.5M6 5V14M10.3 5V14" stroke="#333" stroke-width="1"/></svg>
<span id="t30" style="position:absolute;left:74.8px;top:170.88px;line-height:12.3px;font-size:8.3px;color:#222;font-weight:normal;font-family:'Liberation Sans',sans-serif;letter-spacing:0.000px;white-space:pre">Sales.Customer</span>
<div style="position:absolute;left:72.3px;top:183.03999999999996px;width:140px;height:12.3px;background:#ececf2;"></div>
<svg style="position:absolute;left:46.25px;top:186.59px" width="6.5" height="6.5" viewBox="0 0 10 10"><path d="M3.5 1.5L7 5L3.5 8.5" fill="none" stroke="#2a7fd6" stroke-width="1.8"/></svg>
<svg style="position:absolute;left:58.60px;top:184.04px" width="11" height="11" viewBox="0 0 16 16"><path d="M1.5 2H14.5V14H1.5Z" fill="#fff" stroke="#333" stroke-width="1.3"/><path d="M1.5 3H14.5V5H1.5Z" fill="#333"/><path d="M1.5 8H14.5M1.5 11H14.5M6 5V14M10.3 5V14" stroke="#333" stroke-width="1"/></svg>
<span id="t31" style="position:absolute;left:74.8px;top:183.89px;line-height:12.3px;font-size:8.3px;color:#222;font-weight:normal;font-family:'Liberation Sans',sans-serif;letter-spacing:0.000px;white-space:pre">Sales.Orders</span>
<svg style="position:absolute;left:46.25px;top:199.60px" width="6.5" height="6.5" viewBox="0 0 10 10"><path d="M3.5 1.5L7 5L3.5 8.5" fill="none" stroke="#2a7fd6" stroke-width="1.8"/></svg>
<svg style="position:absolute;left:58.60px;top:197.05px" width="11" height="11" viewBox="0 0 16 16"><path d="M1.5 2H14.5V14H1.5Z" fill="#fff" stroke="#333" stroke-width="1.3"/><path d="M1.5 3H14.5V5H1.5Z" fill="#333"/><path d="M1.5 8H14.5M1.5 11H14.5M6 5V14M10.3 5V14" stroke="#333" stroke-width="1"/></svg>
<span id="t32" style="position:absolute;left:74.8px;top:196.90px;line-height:12.3px;font-size:8.3px;color:#222;font-weight:normal;font-family:'Liberation Sans',sans-serif;letter-spacing:0.000px;white-space:pre">Sales.OrderItem</span>
<svg style="position:absolute;left:46.25px;top:212.61px" width="6.5" height="6.5" viewBox="0 0 10 10"><path d="M3.5 1.5L7 5L3.5 8.5" fill="none" stroke="#2a7fd6" stroke-width="1.8"/></svg>
<svg style="position:absolute;left:58.60px;top:210.06px" width="11" height="11" viewBox="0 0 16 16"><path d="M1.5 2H14.5V14H1.5Z" fill="#fff" stroke="#333" stroke-width="1.3"/><path d="M1.5 3H14.5V5H1.5Z" fill="#333"/><path d="M1.5 8H14.5M1.5 11H14.5M6 5V14M10.3 5V14" stroke="#333" stroke-width="1"/></svg>
<span id="t33" style="position:absolute;left:74.8px;top:209.91px;line-height:12.3px;font-size:8.3px;color:#222;font-weight:normal;font-family:'Liberation Sans',sans-serif;letter-spacing:0.000px;white-space:pre">Sales.Shift</span>
<svg style="position:absolute;left:46.25px;top:225.62px" width="6.5" height="6.5" viewBox="0 0 10 10"><path d="M3.5 1.5L7 5L3.5 8.5" fill="none" stroke="#2a7fd6" stroke-width="1.8"/></svg>
<svg style="position:absolute;left:58.60px;top:223.07px" width="11" height="11" viewBox="0 0 16 16"><path d="M1.5 2H14.5V14H1.5Z" fill="#fff" stroke="#333" stroke-width="1.3"/><path d="M1.5 3H14.5V5H1.5Z" fill="#333"/><path d="M1.5 8H14.5M1.5 11H14.5M6 5V14M10.3 5V14" stroke="#333" stroke-width="1"/></svg>
<span id="t34" style="position:absolute;left:74.8px;top:222.92px;line-height:12.3px;font-size:8.3px;color:#222;font-weight:normal;font-family:'Liberation Sans',sans-serif;letter-spacing:0.000px;white-space:pre">Sales.Staff</span>
<svg style="position:absolute;left:46.25px;top:238.63px" width="6.5" height="6.5" viewBox="0 0 10 10"><path d="M3.5 1.5L7 5L3.5 8.5" fill="none" stroke="#2a7fd6" stroke-width="1.8"/></svg>
<svg style="position:absolute;left:58.60px;top:236.08px" width="11" height="11" viewBox="0 0 16 16"><path d="M1.5 2H14.5V14H1.5Z" fill="#fff" stroke="#333" stroke-width="1.3"/><path d="M1.5 3H14.5V5H1.5Z" fill="#333"/><path d="M1.5 8H14.5M1.5 11H14.5M6 5V14M10.3 5V14" stroke="#333" stroke-width="1"/></svg>
<span id="t35" style="position:absolute;left:74.8px;top:235.93px;line-height:12.3px;font-size:8.3px;color:#222;font-weight:normal;font-family:'Liberation Sans',sans-serif;letter-spacing:0.000px;white-space:pre">Sales.Store</span>
<svg style="position:absolute;left:31.65px;top:251.64px" width="6.5" height="6.5" viewBox="0 0 10 10"><path d="M3.5 1.5L7 5L3.5 8.5" fill="none" stroke="#2a7fd6" stroke-width="1.8"/></svg>
<svg style="position:absolute;left:43.75px;top:248.84px" width="11.5" height="11.5" viewBox="0 0 16 16"><path d="M2 3.5H9L10 2.5H15V13.5H2Z" fill="#d4a660"/><path d="M2 5.5H15V13.5H2Z" fill="#e0b877"/></svg>
<span id="t36" style="position:absolute;left:60.2px;top:248.94px;line-height:12.3px;font-size:8.3px;color:#222;font-weight:normal;font-family:'Liberation Sans',sans-serif;letter-spacing:0.000px;white-space:pre">Views</span>
<svg style="position:absolute;left:31.65px;top:264.65px" width="6.5" height="6.5" viewBox="0 0 10 10"><path d="M3.5 1.5L7 5L3.5 8.5" fill="none" stroke="#2a7fd6" stroke-width="1.8"/></svg>
<svg style="position:absolute;left:43.75px;top:261.85px" width="11.5" height="11.5" viewBox="0 0 16 16"><path d="M2 3.5H9L10 2.5H15V13.5H2Z" fill="#d4a660"/><path d="M2 5.5H15V13.5H2Z" fill="#e0b877"/></svg>
<span id="t37" style="position:absolute;left:60.2px;top:261.95px;line-height:12.3px;font-size:8.3px;color:#222;font-weight:normal;font-family:'Liberation Sans',sans-serif;letter-spacing:0.000px;white-space:pre">Synonyms</span>
<svg style="position:absolute;left:31.65px;top:277.66px" width="6.5" height="6.5" viewBox="0 0 10 10"><path d="M3.5 1.5L7 5L3.5 8.5" fill="none" stroke="#2a7fd6" stroke-width="1.8"/></svg>
<svg style="position:absolute;left:43.75px;top:274.86px" width="11.5" height="11.5" viewBox="0 0 16 16"><path d="M2 3.5H9L10 2.5H15V13.5H2Z" fill="#d4a660"/><path d="M2 5.5H15V13.5H2Z" fill="#e0b877"/></svg>
<span id="t38" style="position:absolute;left:60.2px;top:274.96px;line-height:12.3px;font-size:8.3px;color:#222;font-weight:normal;font-family:'Liberation Sans',sans-serif;letter-spacing:0.000px;white-space:pre">Programmability</span>
<svg style="position:absolute;left:31.65px;top:290.67px" width="6.5" height="6.5" viewBox="0 0 10 10"><path d="M3.5 1.5L7 5L3.5 8.5" fill="none" stroke="#2a7fd6" stroke-width="1.8"/></svg>
<svg style="position:absolute;left:43.75px;top:287.87px" width="11.5" height="11.5" viewBox="0 0 16 16"><path d="M2 3.5H9L10 2.5H15V13.5H2Z" fill="#d4a660"/><path d="M2 5.5H15V13.5H2Z" fill="#e0b877"/></svg>
<span id="t39" style="position:absolute;left:60.2px;top:287.97px;line-height:12.3px;font-size:8.3px;color:#222;font-weight:normal;font-family:'Liberation Sans',sans-serif;letter-spacing:0.000px;white-space:pre">External resources</span>
<svg style="position:absolute;left:31.65px;top:303.68px" width="6.5" height="6.5" viewBox="0 0 10 10"><path d="M3.5 1.5L7 5L3.5 8.5" fill="none" stroke="#2a7fd6" stroke-width="1.8"/></svg>
<svg style="position:absolute;left:43.75px;top:300.88px" width="11.5" height="11.5" viewBox="0 0 16 16"><path d="M2 3.5H9L10 2.5H15V13.5H2Z" fill="#d4a660"/><path d="M2 5.5H15V13.5H2Z" fill="#e0b877"/></svg>
<span id="t40" style="position:absolute;left:60.2px;top:300.98px;line-height:12.3px;font-size:8.3px;color:#222;font-weight:normal;font-family:'Liberation Sans',sans-serif;letter-spacing:0.000px;white-space:pre">Service Broker</span>
<svg style="position:absolute;left:31.65px;top:316.69px" width="6.5" height="6.5" viewBox="0 0 10 10"><path d="M3.5 1.5L7 5L3.5 8.5" fill="none" stroke="#2a7fd6" stroke-width="1.8"/></svg>
<svg style="position:absolute;left:43.75px;top:313.89px" width="11.5" height="11.5" viewBox="0 0 16 16"><path d="M2 3.5H9L10 2.5H15V13.5H2Z" fill="#d4a660"/><path d="M2 5.5H15V13.5H2Z" fill="#e0b877"/></svg>
<span id="t41" style="position:absolute;left:60.2px;top:313.99px;line-height:12.3px;font-size:8.3px;color:#222;font-weight:normal;font-family:'Liberation Sans',sans-serif;letter-spacing:0.000px;white-space:pre">Storage</span>
<svg style="position:absolute;left:31.65px;top:329.70px" width="6.5" height="6.5" viewBox="0 0 10 10"><path d="M3.5 1.5L7 5L3.5 8.5" fill="none" stroke="#2a7fd6" stroke-width="1.8"/></svg>
<svg style="position:absolute;left:43.75px;top:326.90px" width="11.5" height="11.5" viewBox="0 0 16 16"><path d="M2 3.5H9L10 2.5H15V13.5H2Z" fill="#d4a660"/><path d="M2 5.5H15V13.5H2Z" fill="#e0b877"/></svg>
<span id="t42" style="position:absolute;left:60.2px;top:327.00px;line-height:12.3px;font-size:8.3px;color:#222;font-weight:normal;font-family:'Liberation Sans',sans-serif;letter-spacing:0.000px;white-space:pre">Security</span>
</div>
<div style="position:absolute;left:218px;top:90.3px;width:548px;height:20px;background:#eeeef2;"></div>
<div style="position:absolute;left:218.3px;top:89.8px;width:92px;height:20.5px;background:#f5f5f6;border:1px solid #dcdee6;border-bottom:none;box-sizing:border-box"></div>
<div style="position:absolute;left:310.3px;top:89.8px;width:82.4px;height:21px;background:#f5f5f6;border:1px solid #dcdee6;border-bottom:none;border-left:none;box-sizing:border-box"></div>
<svg style="position:absolute;left:224.80px;top:94.70px" width="11" height="11" viewBox="0 0 12 12"><path d="M6 1.3A4.7 4.7 0 1 0 10.7 6H6Z" fill="#8a8a8e"/><circle cx="6" cy="6" r="2.3" fill="#f3f3f4"/><path d="M6 3.5V6.2H8.2" stroke="#666" stroke-width="1.2" fill="none"/><path d="M7.3 0.9L10.9 2.6L9.2 5.2" fill="none" stroke="#8a8a8e" stroke-width="1.3"/></svg>
<span id="t43" style="position:absolute;left:239.2px;top:93.80px;line-height:13.2px;font-size:9.2px;color:#444;font-weight:bold;font-family:'Liberation Sans',sans-serif;letter-spacing:0.035px;white-space:pre">Start Page</span>
<svg style="position:absolute;left:317.30px;top:94.50px" width="11" height="11" viewBox="0 0 12 12"><path d="M4.7 2H9.6V9.6H4.7Z" fill="#fafafa"/><path d="M4.2 1.6H10.6C11.8 1.6 11.8 3.2 10.6 3.2M4.7 1.6V9.2M9.6 3V9.2" fill="none" stroke="#333" stroke-width="1.25"/><path d="M1.2 9.8H9.4M1.3 9.8C0.8 9 1.3 8.4 2.2 8.4H4.6" fill="none" stroke="#333" stroke-width="1.6"/></svg>
<span id="t44" style="position:absolute;left:331.7px;top:93.80px;line-height:13.2px;font-size:9.2px;color:#333;font-weight:bold;font-family:'Liberation Sans',sans-serif;letter-spacing:-0.287px;white-space:pre">SQL.sql*</span>
<svg style="position:absolute;left:377.60px;top:96.00px" width="8.2" height="8.2" viewBox="0 0 12 12"><circle cx="6" cy="6" r="5.4" fill="#6a6a6e"/><path d="M4 4L8 8M8 4L4 8" stroke="#f5f5f6" stroke-width="1.5"/></svg>
<svg style="position:absolute;left:750.20px;top:98.35px" width="5" height="2.5" viewBox="0 0 10 5"><path d="M0 0h10l-5 5z" fill="#444"/></svg>
<div style="position:absolute;left:218.3px;top:110.3px;width:547px;height:353px;background:#fff;border-left:1px solid #dcdce2;box-sizing:border-box"></div>
<div style="position:absolute;left:219px;top:110.3px;width:14.7px;height:317.7px;background:#f0f0f0;"></div>
<div style="position:absolute;left:233.7px;top:110.3px;width:3.3px;height:310.5px;background:#fff200;"></div>
<div style="position:absolute;left:218.3px;top:110px;width:92.5px;height:1px;background:#d2d2d8;"></div>
<div style="position:absolute;left:310.8px;top:110px;width:81.4px;height:1px;background:#ebebf0;"></div>
<div style="position:absolute;left:392.2px;top:110px;width:373.5px;height:1px;background:#d0d0d5;"></div>
<div style="position:absolute;left:246px;top:110.8px;width:504.5px;height:11.4px;background:#e6e6fa;"></div>
<div style="position:absolute;left:246.8px;top:111.2px;width:11px;height:11px;background:#c9c9da;"></div>
<div style="position:absolute;left:304px;top:110.5px;width:446.5px;height:1px;background:#dcdcdc;"></div>
<div style="position:absolute;left:750px;top:110.5px;width:1px;height:34.69999999999999px;background:#dcdcdc;"></div>
<div style="position:absolute;left:397.5px;top:145.2px;width:353.0px;height:1px;background:#dcdcdc;"></div>
<div style="position:absolute;left:397.5px;top:145.2px;width:1px;height:11.300000000000011px;background:#dcdcdc;"></div>
<div style="position:absolute;left:246px;top:156.5px;width:152.5px;height:1px;background:#dcdcdc;"></div>
<div style="position:absolute;left:246px;top:122.0px;width:1px;height:34.5px;background:#dcdcdc;"></div>
<div style="position:absolute;left:246px;top:122.0px;width:58px;height:1px;background:#dcdcdc;"></div>
<div style="position:absolute;left:304px;top:110.5px;width:1px;height:11.5px;background:#dcdcdc;"></div>
<div style="position:absolute;left:314.5px;top:202.6px;width:436.0px;height:1px;background:#dcdcdc;"></div>
<div style="position:absolute;left:750px;top:202.6px;width:1px;height:34.70000000000002px;background:#dcdcdc;"></div>
<div style="position:absolute;left:408.3px;top:237.3px;width:342.2px;height:1px;background:#dcdcdc;"></div>
<div style="position:absolute;left:408.3px;top:237.3px;width:1px;height:11.299999999999983px;background:#dcdcdc;"></div>
<div style="position:absolute;left:246px;top:248.6px;width:163.3px;height:1px;background:#dcdcdc;"></div>
<div style="position:absolute;left:246px;top:214.1px;width:1px;height:34.5px;background:#dcdcdc;"></div>
<div style="position:absolute;left:246px;top:214.1px;width:68.5px;height:1px;background:#dcdcdc;"></div>
<div style="position:absolute;left:314.5px;top:202.6px;width:1px;height:11.5px;background:#dcdcdc;"></div>
<div style="position:absolute;left:240.5px;top:117px;width:1px;height:304px;background:#dedede;"></div>
<div style="position:absolute;left:238px;top:114.2px;width:6px;height:6px;background:#fff;border:1px solid #cbcbcb;box-sizing:border-box"></div>
<div style="position:absolute;left:239.5px;top:116.7px;width:3px;height:1px;background:#a8a8a8;"></div>
<div style="position:absolute;left:238px;top:160.08px;width:6px;height:6px;background:#fff;border:1px solid #cbcbcb;box-sizing:border-box"></div>
<div style="position:absolute;left:239.5px;top:162.58px;width:3px;height:1px;background:#a8a8a8;"></div>
<div style="position:absolute;left:238px;top:205.96px;width:6px;height:6px;background:#fff;border:1px solid #cbcbcb;box-sizing:border-box"></div>
<div style="position:absolute;left:239.5px;top:208.46px;width:3px;height:1px;background:#a8a8a8;"></div>
<div style="position:absolute;left:238px;top:251.84000000000003px;width:6px;height:6px;background:#fff;border:1px solid #cbcbcb;box-sizing:border-box"></div>
<div style="position:absolute;left:239.5px;top:254.34000000000003px;width:3px;height:1px;background:#a8a8a8;"></div>
<div style="position:absolute;left:238px;top:297.72px;width:6px;height:6px;background:#fff;border:1px solid #cbcbcb;box-sizing:border-box"></div>
<div style="position:absolute;left:239.5px;top:300.22px;width:3px;height:1px;background:#a8a8a8;"></div>
<div style="position:absolute;left:238px;top:309.19px;width:6px;height:6px;background:#fff;border:1px solid #cbcbcb;box-sizing:border-box"></div>
<div style="position:absolute;left:239.5px;top:311.69px;width:3px;height:1px;background:#a8a8a8;"></div>
<div style="position:absolute;left:238px;top:366.54px;width:6px;height:6px;background:#fff;border:1px solid #cbcbcb;box-sizing:border-box"></div>
<div style="position:absolute;left:239.5px;top:369.04px;width:3px;height:1px;background:#a8a8a8;"></div>
<div style="position:absolute;left:238px;top:378.01px;width:6px;height:6px;background:#fff;border:1px solid #cbcbcb;box-sizing:border-box"></div>
<div style="position:absolute;left:239.5px;top:380.51px;width:3px;height:1px;background:#a8a8a8;"></div>
<div style="position:absolute;left:240.5px;top:420.5px;width:4px;height:1px;background:#dedede;"></div>
<div style="position:absolute;left:246.8px;top:363.8px;width:21.8px;height:11.4px;background:#d9d9e0;"></div>
<pre style="position:absolute;left:247.3px;top:113.0px;margin:0;font-family:'Liberation Mono',monospace;font-size:8.92px;line-height:11.47px;letter-spacing:0px;color:#000;-webkit-text-stroke:0.22px">
<span style="color:#1010ff">IF</span><span style="color:#808080"> EXISTS (</span><span style="color:#1010ff">SELECT</span>
<span style="color:#808080">      </span><span style="color:#999;font-size:10.5px;line-height:0;position:relative;top:1.2px;left:-0.5px">*</span>
    <span style="color:#1010ff">FROM</span><span style="color:#111"> Sales.Orders</span>
    <span style="color:#1010ff">WHERE</span><span style="color:#111"> TotalAmount </span><span style="color:#808080">&gt;</span><span style="color:#111"> 1000</span><span style="color:#808080">)</span>
<span style="color:#1010ff">BEGIN</span>
<span style="color:#1a8a1a">  -- Outer IF-THEN block</span>
  <span style="color:#1010ff">PRINT</span><span style="color:#f01818"> 'High-value orders found.'</span><span style="color:#808080">;</span>

  <span style="color:#1010ff">IF</span><span style="color:#808080"> EXISTS (</span><span style="color:#1010ff">SELECT</span>
<span style="color:#808080">        </span><span style="color:#999;font-size:10.5px;line-height:0;position:relative;top:1.2px;left:-0.5px">*</span>
      <span style="color:#1010ff">FROM</span><span style="color:#111"> Sales.Orders</span>
      <span style="color:#1010ff">WHERE</span><span style="color:#111"> TotalAmount </span><span style="color:#808080">&gt;</span><span style="color:#111"> 5000</span><span style="color:#808080">)</span>
  <span style="color:#1010ff">BEGIN</span>
<span style="color:#1a8a1a">    -- Inner IF-THEN block</span>
    <span style="color:#1010ff">PRINT</span><span style="color:#f01818"> 'There are orders with a total amount exceeding $5000.'</span><span style="color:#808080">;</span>
  <span style="color:#1010ff">END</span>
  <span style="color:#1010ff">ELSE</span>
  <span style="color:#1010ff">BEGIN</span>
<span style="color:#1a8a1a">    -- Inner IF-THEN alternative block</span>
    <span style="color:#1010ff">PRINT</span><span style="color:#f01818"> 'No orders with a total amount exceeding $5000 found.'</span><span style="color:#808080">;</span>
  <span style="color:#1010ff">END</span>
<span style="color:#1010ff">END</span>
<span style="color:#1010ff">ELSE</span>
<span style="color:#1010ff">BEGIN</span>
<span style="color:#1a8a1a">  -- Outer IF-THEN alternative block</span>
  <span style="color:#1010ff">PRINT</span><span style="color:#f01818"> 'No high-value orders found.'</span><span style="color:#808080">;</span>
<span style="color:#1010ff">END</span><span style="color:#808080">;</span>
</pre>
<div style="position:absolute;left:751.8px;top:110.3px;width:13.7px;height:317.7px;background:#f5f5f5;"></div>
<div style="position:absolute;left:752.3px;top:110.8px;width:13.6px;height:11.7px;background:#f5f5f5;border:1px solid #dedee4;box-sizing:border-box"></div>
<div style="position:absolute;left:754.3px;top:115.7px;width:8.6px;height:2px;background:#444;"></div>
<svg style="position:absolute;left:756.80px;top:111.80px" width="3" height="3" viewBox="0 0 8 8"><path d="M0 4L4 0L8 4Z" fill="#555"/></svg>
<svg style="position:absolute;left:756.80px;top:118.70px" width="3" height="3" viewBox="0 0 8 8"><path d="M0 0L4 4L8 0Z" fill="#555"/></svg>
<svg style="position:absolute;left:755.80px;top:127.50px" width="5" height="5" viewBox="0 0 10 10"><path d="M0 5L5 0L10 5Z" fill="#555"/></svg>
<div style="position:absolute;left:752px;top:136.4px;width:13.5px;height:141.2px;background:#dbdce3;"></div>
<svg style="position:absolute;left:755.80px;top:420.45px" width="5" height="2.5" viewBox="0 0 10 5"><path d="M0 0h10l-5 5z" fill="#444"/></svg>
<div style="position:absolute;left:219px;top:428px;width:546.5px;height:13.7px;background:#f5f5f5;"></div>
<div style="position:absolute;left:219px;top:428px;width:14px;height:13.7px;background:#f5f5f5;border-right:1px solid #e0e0e4;box-sizing:border-box"></div>
<div style="position:absolute;left:225.2px;top:430.8px;width:1.7px;height:8.4px;background:#505050;"></div>
<svg style="position:absolute;left:221.20px;top:433.50px" width="3" height="3" viewBox="0 0 8 8"><path d="M5 0L0 4L5 8Z" fill="#444"/></svg>
<svg style="position:absolute;left:227.70px;top:433.50px" width="3" height="3" viewBox="0 0 8 8"><path d="M0 0L5 4L0 8Z" fill="#444"/></svg>
<svg style="position:absolute;left:238.30px;top:433.00px" width="4" height="4" viewBox="0 0 8 8"><path d="M5 0L0 4L5 8Z" fill="#c4c4c8"/></svg>
<svg style="position:absolute;left:743.00px;top:433.00px" width="4" height="4" viewBox="0 0 8 8"><path d="M0 0L5 4L0 8Z" fill="#c4c4c8"/></svg>
<div style="position:absolute;left:219px;top:441.7px;width:546.5px;height:21.6px;background:#eeeef2;"></div>
<div style="position:absolute;left:219px;top:441.7px;width:46.7px;height:21.6px;background:#d6d7dc;"></div>
<svg style="position:absolute;left:224.80px;top:446.10px" width="11" height="11" viewBox="0 0 12 12"><path d="M4.7 2H9.6V9.6H4.7Z" fill="#fafafa"/><path d="M4.2 1.6H10.6C11.8 1.6 11.8 3.2 10.6 3.2M4.7 1.6V9.2M9.6 3V9.2" fill="none" stroke="#333" stroke-width="1.25"/><path d="M1.2 9.8H9.4M1.3 9.8C0.8 9 1.3 8.4 2.2 8.4H4.6" fill="none" stroke="#333" stroke-width="1.6"/></svg>
<span id="t45" style="position:absolute;left:240.3px;top:446.20px;line-height:13.2px;font-size:9.2px;color:#444;font-weight:bold;font-family:'Liberation Sans',sans-serif;letter-spacing:0.370px;white-space:pre">Text</span>
<div style="position:absolute;left:268px;top:444px;width:1px;height:17px;background:#dedee4;"></div>
<div style="position:absolute;left:278px;top:451.8px;width:8px;height:1.4px;background:#222;"></div>
<div style="position:absolute;left:281.3px;top:448.5px;width:1.4px;height:8px;background:#222;"></div>
<div style="position:absolute;left:319.5px;top:444px;width:1px;height:17px;background:#dedee4;"></div>
<svg style="position:absolute;left:327.55px;top:446.55px" width="11.5" height="11.5" viewBox="0 0 16 16"><circle cx="8" cy="8" r="7.3" fill="#2b9b34"/><path d="M4.3 8.2L7 11L11.8 5" fill="none" stroke="#fff" stroke-width="2.2"/></svg>
<span id="t46" style="position:absolute;left:343.8px;top:446.60px;line-height:13.2px;font-size:9.2px;color:#444;font-weight:normal;font-family:'Liberation Sans',sans-serif;letter-spacing:-0.093px;white-space:pre">Query executed successfully.</span>
<div style="position:absolute;left:467.5px;top:444px;width:1px;height:17px;background:#dedee4;"></div>
<span id="t47" style="position:absolute;left:475px;top:446.60px;line-height:13.2px;font-size:9.2px;color:#444;font-weight:normal;font-family:'Liberation Sans',sans-serif;letter-spacing:-0.446px;white-space:pre">00:00:00.012</span>
<div style="position:absolute;left:531.3px;top:444px;width:1px;height:17px;background:#dedee4;"></div>
<span id="t48" style="position:absolute;left:538.8px;top:446.60px;line-height:13.2px;font-size:9.2px;color:#333;font-weight:normal;font-family:'Liberation Sans',sans-serif;letter-spacing:-0.068px;white-space:pre">localhost (15)</span>
<div style="position:absolute;left:601.3px;top:444px;width:1px;height:17px;background:#dedee4;"></div>
<span id="t49" style="position:absolute;left:608.3px;top:446.60px;line-height:13.2px;font-size:9.2px;color:#444;font-weight:normal;font-family:'Liberation Sans',sans-serif;letter-spacing:-0.509px;white-space:pre">sa</span>
<div style="position:absolute;left:625px;top:444px;width:1px;height:17px;background:#dedee4;"></div>
<span id="t50" style="position:absolute;left:632.2px;top:446.60px;line-height:13.2px;font-size:9.2px;color:#444;font-weight:normal;font-family:'Liberation Sans',sans-serif;letter-spacing:-0.142px;white-space:pre">BicycleStoreDemo</span>
<div style="position:absolute;left:716.2px;top:442px;width:23.8px;height:21.3px;background:#d6d7dc;"></div>
<div style="position:absolute;left:723.3px;top:447.5px;width:10px;height:10px;background:#fff;border:1px solid #222;box-sizing:border-box"></div>
<div style="position:absolute;left:724px;top:452.5px;width:8.6px;height:4.3px;background:#222;"></div>
<div style="position:absolute;left:748px;top:447.5px;width:10px;height:10px;background:#fff;border:1px solid #222;box-sizing:border-box"></div>
<div style="position:absolute;left:2.5px;top:463.3px;width:763px;height:151px;background:#fff;border:1px solid #dcdce2;box-sizing:border-box"></div>
<div style="position:absolute;left:2.5px;top:463.3px;width:763px;height:3.7px;background:#f5f5f6;"></div>
<div style="position:absolute;left:3px;top:467.3px;width:762px;height:20.4px;background:#007acc;"></div>
<span id="t51" style="position:absolute;left:9.5px;top:471.70px;line-height:13.2px;font-size:9.2px;color:#fff;font-weight:bold;font-family:'Liberation Sans',sans-serif;letter-spacing:-0.256px;white-space:pre">Error List</span>
<svg style="position:absolute;left:725.25px;top:473.05px" width="8.5" height="8.5" viewBox="0 0 12 12"><path d="M3.5 1.5H8.5V6.5H3.5Z" fill="#2a4a6a"/><path d="M2.5 6.8H9.5M6 7V11" stroke="#2a4a6a" stroke-width="1.2"/></svg>
<svg style="position:absolute;left:749.80px;top:473.80px" width="7" height="7" viewBox="0 0 10 10"><path d="M1 1L9 9M9 1L1 9" stroke="#2f5f8c" stroke-width="1.3"/></svg>
<div style="position:absolute;left:3px;top:487.7px;width:762px;height:22.3px;background:#eeeef2;"></div>
<div style="position:absolute;left:3px;top:488.3px;width:56.7px;height:21.4px;background:#d6d7dc;"></div>
<div style="position:absolute;left:60px;top:489px;width:3.5px;height:20px;background:#f5f5f6;"></div>
<div style="position:absolute;left:63.7px;top:488.3px;width:73px;height:21.4px;background:#d6d7dc;"></div>
<div style="position:absolute;left:137px;top:489px;width:3.5px;height:20px;background:#f5f5f6;"></div>
<div style="position:absolute;left:140.5px;top:488.3px;width:74.5px;height:21.4px;background:#d6d7dc;"></div>
<div style="position:absolute;left:215px;top:489px;width:3.5px;height:20px;background:#f5f5f6;"></div>
<div style="position:absolute;left:218.5px;top:488.3px;width:114.3px;height:21.4px;background:#d6d7dc;"></div>
<div style="position:absolute;left:333px;top:489px;width:3.5px;height:20px;background:#f5f5f6;"></div>
<svg style="position:absolute;left:9.55px;top:493.25px" width="11.5" height="11.5" viewBox="0 0 16 16"><circle cx="8" cy="8" r="7.5" fill="#e8262d"/><path d="M5 5L11 11M11 5L5 11" stroke="#fff" stroke-width="2.2"/></svg>
<span id="t52" style="position:absolute;left:24.7px;top:493.30px;line-height:13.2px;font-size:9.2px;color:#444;font-weight:normal;font-family:'Liberation Sans',sans-serif;letter-spacing:-0.398px;white-space:pre">0 Errors</span>
<svg style="position:absolute;left:70.55px;top:493.25px" width="11.5" height="11.5" viewBox="0 0 16 16"><path d="M8 1L15.5 14.5H0.5Z" fill="#ffcc1c" stroke="#e8b400" stroke-width="0.8"/><path d="M8 5.5V10.5M8 11.8V13.3" stroke="#222" stroke-width="1.8"/></svg>
<span id="t53" style="position:absolute;left:85.8px;top:493.30px;line-height:13.2px;font-size:9.2px;color:#444;font-weight:normal;font-family:'Liberation Sans',sans-serif;letter-spacing:-0.114px;white-space:pre">0 Warnings</span>
<svg style="position:absolute;left:147.25px;top:493.25px" width="11.5" height="11.5" viewBox="0 0 16 16"><circle cx="8" cy="8" r="7.5" fill="#1e90e0"/><path d="M8 6.8V12.5" stroke="#fff" stroke-width="2"/><circle cx="8" cy="4.2" r="1.2" fill="#fff"/></svg>
<span id="t54" style="position:absolute;left:162.5px;top:493.30px;line-height:13.2px;font-size:9.2px;color:#444;font-weight:normal;font-family:'Liberation Sans',sans-serif;letter-spacing:-0.375px;white-space:pre">2 Messages</span>
<svg style="position:absolute;left:225.80px;top:494.00px" width="10" height="10" viewBox="0 0 16 16"><path d="M1 2H15L9.5 8V14.5L6.5 13V8Z" fill="#333"/></svg>
<span id="t55" style="position:absolute;left:239.7px;top:493.30px;line-height:13.2px;font-size:9.2px;color:#444;font-weight:normal;font-family:'Liberation Sans',sans-serif;letter-spacing:0.024px;white-space:pre">2 In Active Document</span>
<span id="t56" style="position:absolute;left:342.5px;top:493.30px;line-height:13.2px;font-size:9.2px;color:#444;font-weight:normal;font-family:'Liberation Sans',sans-serif;letter-spacing:-0.076px;white-space:pre">2 of 2 items displayed</span>
<div style="position:absolute;left:3px;top:510px;width:762px;height:19.2px;background:#f5f5f5;border-top:1px solid #e6e6ea;box-sizing:border-box"></div>
<div style="position:absolute;left:60px;top:510.5px;width:1px;height:50.3px;background:#dcdce0;"></div>
<div style="position:absolute;left:117.5px;top:510.5px;width:1px;height:50.3px;background:#dcdce0;"></div>
<div style="position:absolute;left:429.2px;top:510.5px;width:1px;height:50.3px;background:#dcdce0;"></div>
<div style="position:absolute;left:644.2px;top:510.5px;width:1px;height:50.3px;background:#dcdce0;"></div>
<div style="position:absolute;left:703.3px;top:510.5px;width:1px;height:50.3px;background:#dcdce0;"></div>
<div style="position:absolute;left:3px;top:529.2px;width:762px;height:15.8px;background:#0078d4;"></div>
<div style="position:absolute;left:60px;top:529.2px;width:1px;height:15.8px;background:#3a98e0;"></div>
<div style="position:absolute;left:117.5px;top:529.2px;width:1px;height:15.8px;background:#3a98e0;"></div>
<div style="position:absolute;left:429.2px;top:529.2px;width:1px;height:15.8px;background:#3a98e0;"></div>
<div style="position:absolute;left:644.2px;top:529.2px;width:1px;height:15.8px;background:#3a98e0;"></div>
<div style="position:absolute;left:703.3px;top:529.2px;width:1px;height:15.8px;background:#3a98e0;"></div>
<div style="position:absolute;left:3px;top:560.5px;width:762px;height:1px;background:#dcdce0;"></div>
<span id="t57" style="position:absolute;left:122.5px;top:513.85px;line-height:11.9px;font-size:7.9px;color:#333;font-weight:normal;font-family:'Liberation Sans',sans-serif;letter-spacing:0.094px;white-space:pre">Description</span>
<span id="t58" style="position:absolute;left:433.8px;top:513.85px;line-height:11.9px;font-size:7.9px;color:#333;font-weight:normal;font-family:'Liberation Sans',sans-serif;letter-spacing:0.020px;white-space:pre">Location</span>
<span id="t59" style="position:absolute;left:648.8px;top:513.85px;line-height:11.9px;font-size:7.9px;color:#333;font-weight:normal;font-family:'Liberation Sans',sans-serif;letter-spacing:-0.355px;white-space:pre">Line</span>
<span id="t60" style="position:absolute;left:708.5px;top:513.85px;line-height:11.9px;font-size:7.9px;color:#333;font-weight:normal;font-family:'Liberation Sans',sans-serif;letter-spacing:-0.034px;white-space:pre">Column</span>
<svg style="position:absolute;left:4.75px;top:531.45px" width="11.5" height="11.5" viewBox="0 0 16 16"><circle cx="8" cy="8" r="6.8" fill="none" stroke="#cfe6fa" stroke-width="1.3"/><path d="M8 6.8V12" stroke="#cfe6fa" stroke-width="1.6"/><circle cx="8" cy="4.5" r="1" fill="#cfe6fa"/></svg>
<svg style="position:absolute;left:5.00px;top:547.50px" width="11" height="11" viewBox="0 0 16 16"><circle cx="8" cy="8" r="7.5" fill="#1e90e0"/><path d="M8 6.8V12.5" stroke="#fff" stroke-width="2"/><circle cx="8" cy="4.2" r="1.2" fill="#fff"/></svg>
<span id="t61" style="position:absolute;right:654.5px;top:532.00px;line-height:12.2px;font-size:8.2px;color:#fff;font-weight:normal;font-family:'Liberation Sans',sans-serif;letter-spacing:0.000px;white-space:pre">1</span>
<span id="t62" style="position:absolute;right:654.5px;top:547.80px;line-height:12.2px;font-size:8.2px;color:#222;font-weight:normal;font-family:'Liberation Sans',sans-serif;letter-spacing:0.000px;white-space:pre">2</span>
<span id="t63" style="position:absolute;left:122.5px;top:532.00px;line-height:12.2px;font-size:8.2px;color:#fff;font-weight:normal;font-family:'Liberation Sans',sans-serif;letter-spacing:0.085px;white-space:pre">High-value orders found.</span>
<span id="t64" style="position:absolute;left:122.5px;top:547.80px;line-height:12.2px;font-size:8.2px;color:#222;font-weight:normal;font-family:'Liberation Sans',sans-serif;letter-spacing:0.084px;white-space:pre">No orders with a total amount exceeding $5000 found.</span>
<span id="t65" style="position:absolute;left:433.8px;top:532.00px;line-height:12.2px;font-size:8.2px;color:#fff;font-weight:normal;font-family:'Liberation Sans',sans-serif;letter-spacing:-0.304px;white-space:pre">SQL.sql</span>
<span id="t66" style="position:absolute;left:433.8px;top:547.80px;line-height:12.2px;font-size:8.2px;color:#222;font-weight:normal;font-family:'Liberation Sans',sans-serif;letter-spacing:-0.304px;white-space:pre">SQL.sql</span>
<span id="t67" style="position:absolute;right:68px;top:532.00px;line-height:12.2px;font-size:8.2px;color:#fff;font-weight:normal;font-family:'Liberation Sans',sans-serif;letter-spacing:0.000px;white-space:pre">4</span>
<span id="t68" style="position:absolute;right:68px;top:547.80px;line-height:12.2px;font-size:8.2px;color:#222;font-weight:normal;font-family:'Liberation Sans',sans-serif;letter-spacing:0.000px;white-space:pre">14</span>
<span id="t69" style="position:absolute;right:7px;top:532.00px;line-height:12.2px;font-size:8.2px;color:#fff;font-weight:normal;font-family:'Liberation Sans',sans-serif;letter-spacing:0.000px;white-space:pre">1</span>
<span id="t70" style="position:absolute;right:7px;top:547.80px;line-height:12.2px;font-size:8.2px;color:#222;font-weight:normal;font-family:'Liberation Sans',sans-serif;letter-spacing:0.000px;white-space:pre">1</span>
<svg style="position:absolute;left:12.75px;top:623.25px" width="11.5" height="11.5" viewBox="0 0 16 16"><path d="M9 2H2V14H9" fill="none" stroke="#444" stroke-width="1.4"/><path d="M5 8H12M9.5 4.5L13.5 8L9.5 11.5Z" fill="#333" stroke="#333" stroke-width="1.6"/></svg>
<span id="t71" style="position:absolute;left:26.5px;top:623.80px;line-height:12.2px;font-size:8.2px;color:#333;font-weight:normal;font-family:'Liberation Sans',sans-serif;letter-spacing:0.234px;white-space:pre">Output</span>
<div style="position:absolute;left:0px;top:636.7px;width:768px;height:23.3px;background:#f5f5f5;"></div>
<div style="position:absolute;left:0px;top:0px;width:768px;height:1px;background:#c6c6c8;"></div>
<div style="position:absolute;left:0px;top:0px;width:1.3px;height:660px;background:#b4b4b8;"></div>
<div style="position:absolute;left:766.7px;top:0px;width:1.3px;height:660px;background:#b8b8bc;"></div>
<div style="position:absolute;left:0px;top:659px;width:768px;height:1px;background:#b8b8bc;"></div>
<div style="position:absolute;left:763.5px;top:655px;width:1.5px;height:1.5px;background:#cfcfd4;"></div>
<div style="position:absolute;left:760.5px;top:655px;width:1.5px;height:1.5px;background:#cfcfd4;"></div>
<div style="position:absolute;left:757.5px;top:655px;width:1.5px;height:1.5px;background:#cfcfd4;"></div>
<div style="position:absolute;left:763.5px;top:652px;width:1.5px;height:1.5px;background:#cfcfd4;"></div>
<div style="position:absolute;left:760.5px;top:652px;width:1.5px;height:1.5px;background:#cfcfd4;"></div>
<div style="position:absolute;left:763.5px;top:649px;width:1.5px;height:1.5px;background:#cfcfd4;"></div>
</body></html>
